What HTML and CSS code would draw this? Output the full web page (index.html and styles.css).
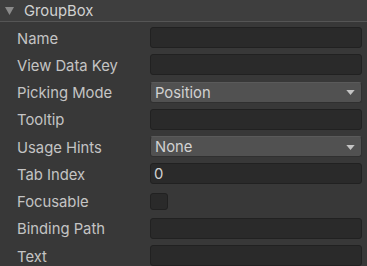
FILE: index.html
```html
<!DOCTYPE html>
<html lang="en">
<head>
    <meta charset="UTF-8">
    <meta name="viewport" content="width=device-width, initial-scale=1.0">
    <title>GroupBox</title>
    <link rel="stylesheet" href="styles.css">
</head>
<body>
    <div class="foldout">
        <div class="foldout-head">
            <svg class="arrow" viewBox="0 0 8 7"><path d="M0 0H8L4 7Z"/></svg>
            <span>GroupBox</span>
        </div>
        <div class="props">
            <div class="row"><label>Name</label><div class="field"></div></div>
            <div class="row"><label>View Data Key</label><div class="field"></div></div>
            <div class="row"><label>Picking Mode</label><div class="drop"><span>Position</span><svg class="caret" viewBox="0 0 10 6"><path d="M0 0H10L5 6Z"/></svg></div></div>
            <div class="row"><label>Tooltip</label><div class="field"></div></div>
            <div class="row"><label>Usage Hints</label><div class="drop"><span>None</span><svg class="caret" viewBox="0 0 10 6"><path d="M0 0H10L5 6Z"/></svg></div></div>
            <div class="row"><label>Tab Index</label><div class="field">0</div></div>
            <div class="row"><label>Focusable</label><div class="check"></div></div>
            <div class="row"><label>Binding Path</label><div class="field"></div></div>
            <div class="row"><label>Text</label><div class="field"></div></div>
        </div>
    </div>
</body>
</html>
```
FILE: styles.css
```css
body {
    margin:0;
    background:#383838;
    font-family:Inter, "Noto Sans", sans-serif;
    font-size:14.8px;
    color:#c4c4c4;
    overflow:hidden;
}
.foldout-head {
    height:21px;
    display:flex;
    align-items:center;
    background:#3e3e3e;
    border-bottom:1px solid #555;
    color:#d2d2d2;
}
.arrow {width:9px;height:8px;margin:0 10px 0 5px;fill:#8a8a8a;}
.props {padding-top:2px;}
.row {
    height:27.25px;
    display:flex;
    align-items:center;
}
.row label {
    width:133px;
    padding:2px 0 0 17px;
    flex:none;
}
.field {
    flex:1;
    height:19px;
    margin-right:5px;
    background:#2a2a2a;
    border:1px solid #212121;
    border-radius:3px;
    padding:1px 0 0 3px;
    box-sizing:border-box;
    height:21px;
    line-height:19px;
    color:#d2d2d2;
}
.drop {
    flex:1;
    height:21px;
    margin-right:5px;
    background:#515151;
    border:1px solid #303030;
    border-top-color:#5a5a5a;
    border-radius:3px;
    box-sizing:border-box;
    display:flex;
    align-items:center;
    justify-content:space-between;
    padding:1px 6px 0 4px;
    color:#d2d2d2;
}
.caret {width:9px;height:5px;fill:#c4c4c4;}
.check {
    width:16px;
    height:15px;
    background:#2a2a2a;
    border:1px solid #212121;
    border-radius:3px;
}
```
